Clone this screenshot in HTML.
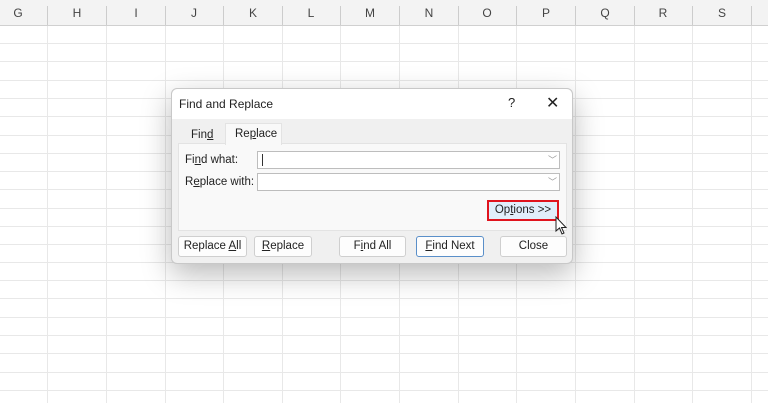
<!DOCTYPE html><html><head><style>
body{margin:0;width:768px;height:403px;overflow:hidden;background:#fff;font-family:"Liberation Sans",sans-serif;position:relative}
.hdr{position:absolute;left:0;top:0;width:768px;height:25px;background:#f3f3f3;border-bottom:1px solid #d0d0d0}
.col{position:absolute;top:6px;font-size:12px;color:#444;width:58px;text-align:center}
.dlg{position:absolute;left:171px;top:88px;width:400px;height:174px;background:#f0f0f0;border:1px solid #c8c8c8;border-radius:6px;box-shadow:0 10px 30px rgba(0,0,0,.28);font-size:11.5px;color:#222}
.abs{position:absolute}
.btn{position:absolute;top:147px;height:19px;background:#fdfdfd;border:1px solid #cfcfcf;border-radius:3px;text-align:center;line-height:19px;font-size:11.5px;color:#222}
.inp{position:absolute;left:85px;width:301px;height:16px;background:#fff;border:1px solid #bdbdbd}
.dd{position:absolute;right:2px;top:1px;color:#999;font-size:9px}
</style></head><body>
<svg class="abs" style="left:0;top:0" width="768" height="403">
<g stroke="#e8e8e8" stroke-width="1">
<line x1="0" x2="768" y1="43.5" y2="43.5"/><line x1="0" x2="768" y1="61.5" y2="61.5"/><line x1="0" x2="768" y1="80.5" y2="80.5"/><line x1="0" x2="768" y1="98.5" y2="98.5"/><line x1="0" x2="768" y1="116.5" y2="116.5"/><line x1="0" x2="768" y1="135.5" y2="135.5"/><line x1="0" x2="768" y1="153.5" y2="153.5"/><line x1="0" x2="768" y1="171.5" y2="171.5"/><line x1="0" x2="768" y1="189.5" y2="189.5"/><line x1="0" x2="768" y1="208.5" y2="208.5"/><line x1="0" x2="768" y1="226.5" y2="226.5"/><line x1="0" x2="768" y1="244.5" y2="244.5"/><line x1="0" x2="768" y1="262.5" y2="262.5"/><line x1="0" x2="768" y1="280.5" y2="280.5"/><line x1="0" x2="768" y1="298.5" y2="298.5"/><line x1="0" x2="768" y1="317.5" y2="317.5"/><line x1="0" x2="768" y1="335.5" y2="335.5"/><line x1="0" x2="768" y1="353.5" y2="353.5"/><line x1="0" x2="768" y1="372.5" y2="372.5"/><line x1="0" x2="768" y1="390.5" y2="390.5"/>
<line y1="0" y2="403" x1="47.5" x2="47.5"/><line y1="0" y2="403" x1="106.5" x2="106.5"/><line y1="0" y2="403" x1="165.5" x2="165.5"/><line y1="0" y2="403" x1="223.5" x2="223.5"/><line y1="0" y2="403" x1="282.5" x2="282.5"/><line y1="0" y2="403" x1="340.5" x2="340.5"/><line y1="0" y2="403" x1="399.5" x2="399.5"/><line y1="0" y2="403" x1="458.5" x2="458.5"/><line y1="0" y2="403" x1="516.5" x2="516.5"/><line y1="0" y2="403" x1="575.5" x2="575.5"/><line y1="0" y2="403" x1="634.5" x2="634.5"/><line y1="0" y2="403" x1="692.5" x2="692.5"/><line y1="0" y2="403" x1="751.5" x2="751.5"/>
</g></svg>
<div class="hdr"></div>
<svg class="abs" style="left:0;top:0" width="768" height="25"><g stroke="#ccc"><line y1="6" y2="25" x1="47.5" x2="47.5"/><line y1="6" y2="25" x1="106.5" x2="106.5"/><line y1="6" y2="25" x1="165.5" x2="165.5"/><line y1="6" y2="25" x1="223.5" x2="223.5"/><line y1="6" y2="25" x1="282.5" x2="282.5"/><line y1="6" y2="25" x1="340.5" x2="340.5"/><line y1="6" y2="25" x1="399.5" x2="399.5"/><line y1="6" y2="25" x1="458.5" x2="458.5"/><line y1="6" y2="25" x1="516.5" x2="516.5"/><line y1="6" y2="25" x1="575.5" x2="575.5"/><line y1="6" y2="25" x1="634.5" x2="634.5"/><line y1="6" y2="25" x1="692.5" x2="692.5"/><line y1="6" y2="25" x1="751.5" x2="751.5"/></g></svg>
<div class="col" style="left:-11px">G</div><div class="col" style="left:48px">H</div><div class="col" style="left:107px">I</div><div class="col" style="left:165px">J</div><div class="col" style="left:224px">K</div><div class="col" style="left:282px">L</div><div class="col" style="left:341px">M</div><div class="col" style="left:400px">N</div><div class="col" style="left:458px">O</div><div class="col" style="left:517px">P</div><div class="col" style="left:576px">Q</div><div class="col" style="left:634px">R</div><div class="col" style="left:693px">S</div>
<div class="dlg">
<div class="abs" style="left:0;top:0;width:400px;height:30px;background:#fff;border-radius:6px 6px 0 0"></div>
<div class="abs" style="left:7px;top:8px;font-size:12px">Find and Replace</div>
<div class="abs" style="left:336px;top:6px;font-size:13px">?</div>
<div class="abs" style="left:374px;top:4px;font-size:16px">✕</div>
<div class="abs" style="left:6px;top:54px;width:387px;height:86px;background:#f9f9f9;border:1px solid #e3e3e3"></div>
<div class="abs" style="left:19px;top:40px">Fin<u>d</u></div>
<div class="abs" style="left:53px;top:34px;width:55px;height:21px;background:#f9f9f9;border:1px solid #e3e3e3;border-bottom:none"></div>
<div class="abs" style="left:63px;top:39px">Re<u>p</u>lace</div>
<div class="abs" style="left:13px;top:65px">Fi<u>n</u>d what:</div>
<div class="abs" style="left:13px;top:87px">R<u>e</u>place with:</div>
<div class="inp" style="top:62px"><div class="abs" style="left:4px;top:2px;width:1px;height:12px;background:#333"></div><div class="dd">﹀</div></div>
<div class="inp" style="top:84px"><div class="dd">﹀</div></div>
<div class="abs" style="left:315px;top:111px;width:68px;height:17px;background:#e1eefb;border:2px solid #e0141e;text-align:center;line-height:17px">Op<u>t</u>ions &gt;&gt;</div>
<svg class="abs" style="left:382px;top:127px" width="14" height="20"><path d="M2 1 L2 15 L5.5 12 L8 18 L10 17 L7.5 11.5 L12 11.5 Z" fill="#fff" stroke="#222" stroke-width="1"/></svg>
<div class="btn" style="left:6px;width:67px">Replace <u>A</u>ll</div>
<div class="btn" style="left:82px;width:56px"><u>R</u>eplace</div>
<div class="btn" style="left:167px;width:65px">F<u>i</u>nd All</div>
<div class="btn" style="left:244px;width:66px;border-color:#5a8fc9"><u>F</u>ind Next</div>
<div class="btn" style="left:328px;width:65px">Close</div>
</div>
</body></html>
